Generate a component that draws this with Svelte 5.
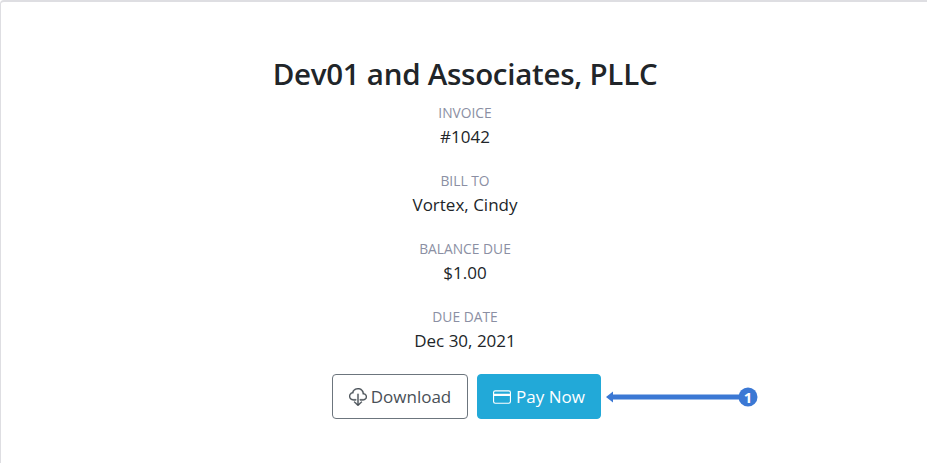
<script>
  const fields = [
    { label: 'INVOICE', value: '#1042' },
    { label: 'BILL TO', value: 'Vortex, Cindy' },
    { label: 'BALANCE DUE', value: '$1.00' },
    { label: 'DUE DATE', value: 'Dec 30, 2021' }
  ];
</script>

<main class="card">
  <h1 class="title">Dev01 and Associates, PLLC</h1>

  {#each fields as field}
    <section class="field">
      <div class="field__label">{field.label}</div>
      <div class="field__value">{field.value}</div>
    </section>
  {/each}

  <div class="actions">
    <button class="button button--outline" type="button">
      <svg class="button__icon" viewBox="0 0 16 16" fill="currentColor" stroke="currentColor" stroke-width="0.3">
        <path d="M4.406 1.342A5.53 5.53 0 0 1 8 0c2.69 0 4.923 2 5.166 4.579C14.758 4.804 16 6.137 16 7.773 16 9.569 14.502 11 12.687 11H10a.5.5 0 0 1 0-1h2.688C13.979 10 15 8.988 15 7.773c0-1.216-1.02-2.228-2.313-2.228h-.5v-.5C12.188 2.825 10.328 1 8 1a4.53 4.53 0 0 0-2.941 1.1c-.757.652-1.153 1.438-1.153 2.055v.448l-.445.049C2.064 4.805 1 5.952 1 7.318 1 8.785 2.23 10 3.781 10H6a.5.5 0 0 1 0 1H3.781C1.708 11 0 9.366 0 7.318c0-1.763 1.266-3.223 2.942-3.593.143-.863.698-1.723 1.464-2.383z"/>
        <path d="M7.646 15.854a.5.5 0 0 0 .708 0l3-3a.5.5 0 0 0-.708-.708L8.5 14.293V5.5a.5.5 0 0 0-1 0v8.793l-2.146-2.147a.5.5 0 0 0-.708.708l3 3z"/>
      </svg>
      Download
    </button>
    <button class="button button--pay" type="button">
      <svg class="button__icon" viewBox="0 0 16 16" fill="currentColor">
        <path d="M0 4a2 2 0 0 1 2-2h12a2 2 0 0 1 2 2v8a2 2 0 0 1-2 2H2a2 2 0 0 1-2-2V4zm2-1a1 1 0 0 0-1 1v1h14V4a1 1 0 0 0-1-1H2zm13 4H1v5a1 1 0 0 0 1 1h12a1 1 0 0 0 1-1V7z"/>
      </svg>
      Pay Now
    </button>
  </div>

  <!-- callout drawn over the screenshot -->
  <svg class="callout" width="160" height="26" viewBox="0 0 160 26">
    <path d="M1 13 L8 7.5 V10.5 H135 V15.5 H8 V18.5 Z" fill="#3b78d4" />
    <circle cx="143" cy="13" r="9.5" fill="#3b78d4" />
    <text x="143" y="18.5" class="callout__num">1</text>
  </svg>
</main>

<style>
  :global(body) {
    background: #fff;
  }

  .card {
    position: relative;
    box-sizing: border-box;
    height: 463px;
    padding-top: 51px;
    border-top: 2px solid #dedee2;
    border-left: 1px solid #dedee2;
    border-radius: 4px 0 0 0;
    font-family: "Open Sans", "Noto Sans", sans-serif;
    color: #212529;
    text-align: center;
  }

  .title {
    width: 928px;
    margin: 0 0 7px;
    font-size: 29.5px;
    font-weight: 600;
    letter-spacing: -0.26px;
    line-height: 42px;
  }

  .field {
    width: 928px;
    height: 68px;
  }

  .field__label {
    font-size: 13.8px;
    line-height: 22px;
    color: #8b8fa3;
  }

  .field__value {
    font-size: 17px;
    line-height: 26px;
  }

  .actions {
    display: flex;
    gap: 9px;
    margin: 0 0 0 331px;
  }

  .button {
    display: flex;
    align-items: center;
    justify-content: center;
    gap: 4px;
    height: 45px;
    padding: 0;
    border-radius: 4px;
    font-family: inherit;
    font-size: 17px;
  }

  .button--outline {
    width: 136px;
    border: 1px solid #6c757d;
    background: #fff;
    color: #495057;
  }

  .button--pay {
    width: 124px;
    gap: 5px;
    border: 1px solid #22a9d8;
    background: #22a9d8;
    color: #fff;
  }

  .button__icon {
    width: 18px;
    height: 18px;
  }

  .callout {
    position: absolute;
    left: 604px;
    top: 382px;
  }

  .callout__num {
    fill: #fff;
    font-size: 15px;
    font-weight: 700;
    text-anchor: middle;
  }
</style>
